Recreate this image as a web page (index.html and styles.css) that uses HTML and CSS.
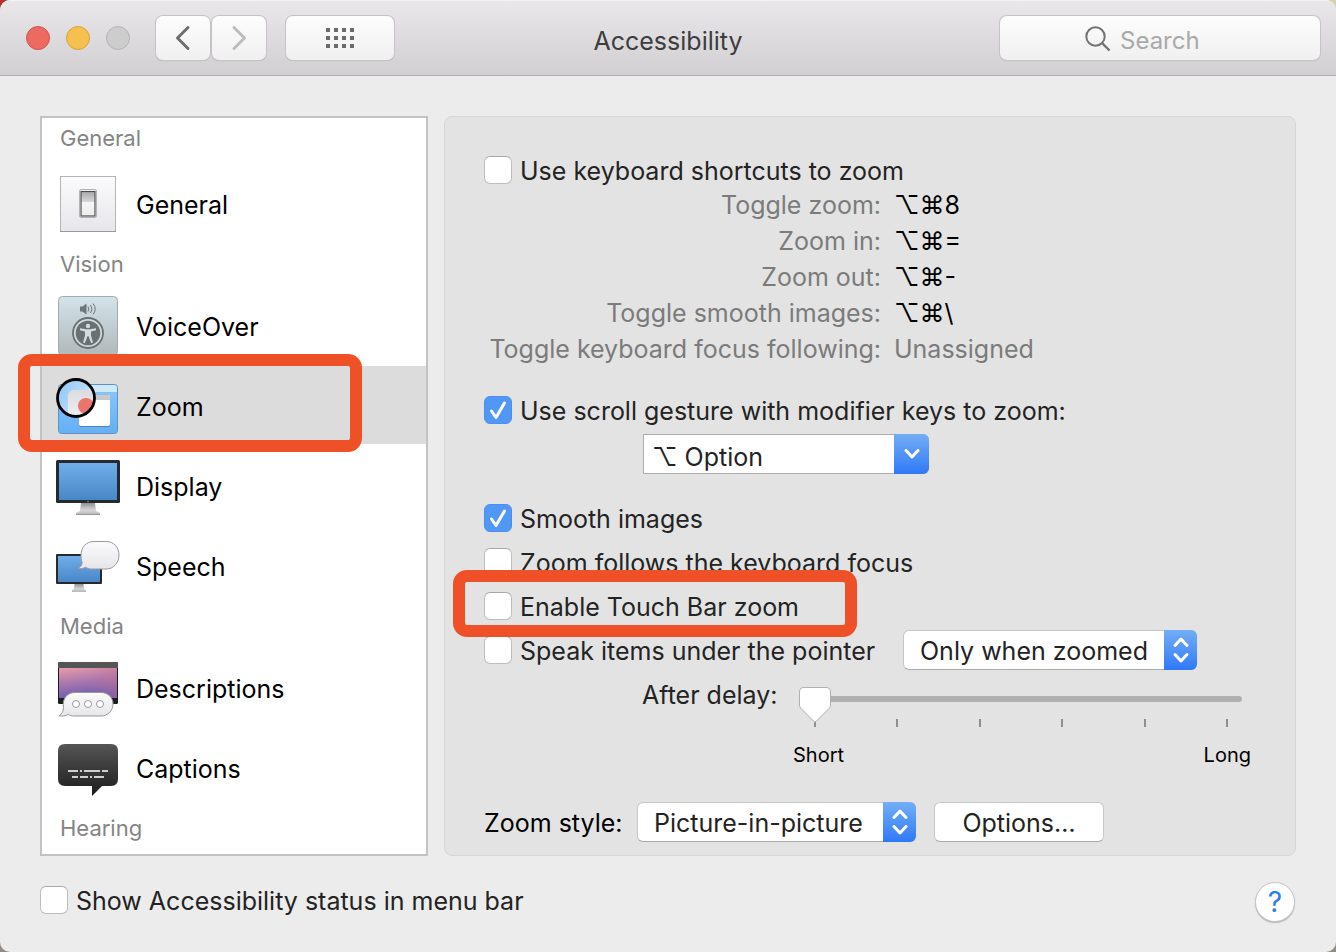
FILE: index.html
```html
<!DOCTYPE html>
<html lang="en">
<head>
<meta charset="utf-8">
<meta name="viewport" content="width=device-width, initial-scale=1">
<title>Accessibility</title>
<link rel="stylesheet" href="styles.css">
</head>
<body>
<div class="window">
  <header class="titlebar">
    <div class="titlebar-left">
      <div class="lights">
        <button class="light light-close" aria-label="Close"></button>
        <button class="light light-minimize" aria-label="Minimize"></button>
        <button class="light light-off" aria-label="Full screen" disabled></button>
      </div>
      <div class="history">
        <button class="tool tool-nav" aria-label="Back">
          <svg width="54" height="44" viewBox="0 0 54 44" fill="none" stroke="#6e6e6e" stroke-width="3" stroke-linecap="round" stroke-linejoin="round"><path d="M32 11.500 21.500 22 32 32.500"/></svg>
        </button>
        <button class="tool tool-nav" aria-label="Forward" disabled>
          <svg width="54" height="44" viewBox="0 0 54 44" fill="none" stroke="#bcbcbc" stroke-width="3" stroke-linecap="round" stroke-linejoin="round"><path d="M22 11.500 32.500 22 22 32.500"/></svg>
        </button>
      </div>
      <button class="tool tool-all" aria-label="Show all">
        <svg width="28" height="20" viewBox="0 0 28 20" fill="#6b6b6b"><path d="M0 0h4v4H0zM8 0h4v4H8zM16 0h4v4h-4zM24 0h4v4h-4zM0 8h4v4H0zM8 8h4v4H8zM16 8h4v4h-4zM24 8h4v4h-4zM0 16h4v4H0zM8 16h4v4H8zM16 16h4v4h-4zM24 16h4v4h-4z"/></svg>
      </button>
    </div>
    <h1 class="title">Accessibility</h1>
    <div class="search">
      <svg class="search-icon" width="26" height="28" viewBox="0 -2 26 28" fill="none" stroke="#727272" stroke-width="2"><circle cx="10.500" cy="10.500" r="9.200"/><path d="M17 17 24.500 24.500" stroke-width="2.400"/></svg>
      <input class="search-input" type="search" placeholder="Search" aria-label="Search">
    </div>
  </header>

  <main class="content">
    <nav class="sidebar" aria-label="Accessibility categories">
      <h2 class="group group-first">General</h2>
      <button class="item">
        <svg class="item-icon" viewBox="0 0 64 64">
          <defs>
            <linearGradient id="plate" x2="0" y2="1"><stop stop-color="#fbfbfc"/><stop offset="1" stop-color="#e6e6ea"/></linearGradient>
            <linearGradient id="switch" x2="0" y2="1"><stop stop-color="#a9a9ab"/><stop offset=".42" stop-color="#d6d6d8"/><stop offset=".45" stop-color="#f6f6f7"/><stop offset="1" stop-color="#ececee"/></linearGradient>
          </defs>
          <rect x="4.500" y="4.500" width="55" height="55" fill="url(#plate)" stroke="#b4b4b7"/>
          <path d="M4 59.500h56" stroke="#98989b"/>
          <rect x="23.500" y="17.500" width="17" height="28" rx="1.500" fill="#fff" stroke="#b4b4b6"/>
          <rect x="25" y="19.500" width="14" height="24.500" fill="url(#switch)" stroke="#4e4e50" stroke-width="1.200"/>
        </svg>
        <span>General</span>
      </button>
      <h2 class="group">Vision</h2>
      <button class="item">
        <svg class="item-icon" viewBox="0 0 64 64">
          <defs><linearGradient id="vo" x2="0" y2="1"><stop stop-color="#d3e3ea"/><stop offset="1" stop-color="#b0b8ba"/></linearGradient></defs>
          <rect x="2.500" y="2.500" width="59" height="59" rx="4" fill="url(#vo)" stroke="#9fabb0"/>
          <path d="M24 12.500h2.500l4-3v11l-4-3H24z" fill="#6c7578"/>
          <path d="M32 12.500q1.500 2.500 0 5M34.500 11q3 4 0 8M37 9.500q4.500 5.500 0 11" fill="none" stroke="#6c7578"/>
          <circle cx="32" cy="39" r="15" fill="#cfd8db" stroke="#687073" stroke-width="1.800"/>
          <circle cx="32" cy="39" r="12.300" fill="#687073"/>
          <g fill="#d2dbdd"><circle cx="32" cy="32" r="2.200"/><path d="M24 34.300l6 1h4l6-1v1.900l-5 1.300v4l2 7-1.900.5-2.700-7h-.8l-2.700 7-1.900-.5 2-7v-4l-5-1.300z"/></g>
        </svg>
        <span>VoiceOver</span>
      </button>
      <button class="item item-selected" aria-current="true">
        <svg class="item-icon" viewBox="0 0 64 64">
          <defs>
            <linearGradient id="desk" x2="0" y2="1"><stop stop-color="#8cc8fb"/><stop offset="1" stop-color="#65aff3"/></linearGradient>
            <linearGradient id="lensfill" x2="1" y2=".6"><stop stop-color="#86c1f7"/><stop offset="1" stop-color="#d6ebfb"/></linearGradient>
            <linearGradient id="lenspage" x2="0" y2="1"><stop stop-color="#dcdce0"/><stop offset="1" stop-color="#f2f2f4"/></linearGradient>
            <clipPath id="lens"><circle cx="20" cy="24" r="18"/></clipPath>
          </defs>
          <rect x="2.500" y="10.500" width="59" height="49" rx="3" fill="url(#desk)" stroke="#5d93c6"/>
          <path d="M3 18v-4q0-3 3-3h52q3 0 3 3v4z" fill="#cfe8fb"/>
          <path d="M3 18.500h58" stroke="#8cbfe8"/>
          <rect x="23" y="22" width="31" height="31" rx="2" fill="#4e86bb"/>
          <rect x="23" y="21" width="31" height="31" rx="2" fill="#fff"/>
          <path d="M23 26v-3q0-2 2-2h27q2 0 2 2v3z" fill="#c9c9cc"/>
          <g clip-path="url(#lens)"><path d="M0 4h42v40H0z" fill="url(#lensfill)"/><path d="M12 46V22q0-6 6-6h26v30z" fill="url(#lenspage)"/><circle cx="30" cy="32" r="8" fill="#e9756d"/></g>
          <circle cx="20" cy="24" r="18.500" fill="none" stroke="#000" stroke-width="2.800"/>
        </svg>
        <span>Zoom</span>
        <i class="marker marker-item"></i>
      </button>
      <button class="item">
        <svg class="item-icon" viewBox="0 0 64 64">
          <defs>
            <linearGradient id="screen" x2="0" y2="1"><stop stop-color="#70aeea"/><stop offset="1" stop-color="#4986c6"/></linearGradient>
            <linearGradient id="stand" x2="0" y2="1"><stop stop-color="#929292"/><stop offset=".6" stop-color="#d6d6d6"/><stop offset="1" stop-color="#b5b5b5"/></linearGradient>
          </defs>
          <path d="M25 49h14l1 8 4 2v2H20v-2l4-2z" fill="url(#stand)"/>
          <path d="M20 60.500h24" stroke="#999"/>
          <rect y="6" width="64" height="43" rx="1.500" fill="#252a2e"/>
          <rect x="3" y="9" width="58" height="37" fill="url(#screen)"/>
          <circle cx="32" cy="47.500" r=".8" fill="#999"/>
        </svg>
        <span>Display</span>
      </button>
      <button class="item">
        <svg class="item-icon" viewBox="0 0 64 64">
          <path d="M18.500 50h9l.5 5 2 1v2H16v-2l2-1z" fill="url(#stand)"/>
          <rect y="20" width="46" height="30" rx="1" fill="#252a2e"/>
          <rect x="2" y="22" width="42" height="26" fill="url(#screen)"/>
          <path d="M38 7.500h12c8 0 13 6 13 13.500s-5 14-13 14H35c-2 0-4-.8-5.500-1.800-2 1.400-5 1.800-7.500 1.300 2.500-1.500 4-3.500 4.200-6C25 26 25 23.500 25 21c0-7.500 5-13.500 13-13.500z" fill="url(#plate)" stroke="#98989c"/>
        </svg>
        <span>Speech</span>
      </button>
      <h2 class="group">Media</h2>
      <button class="item">
        <svg class="item-icon" viewBox="0 0 64 64">
          <defs>
            <linearGradient id="sunset" x1=".1" x2=".35" y2="1"><stop stop-color="#e49ba8"/><stop offset=".5" stop-color="#a876ae"/><stop offset="1" stop-color="#6a5cae"/></linearGradient>
            <linearGradient id="glow" y1="0" x2="1" y2="0"><stop offset=".5" stop-color="#c9708f" stop-opacity="0"/><stop offset="1" stop-color="#c9708f" stop-opacity=".4"/></linearGradient>
          </defs>
          <rect x="2" y="6" width="60" height="42" rx="1.500" fill="#1d1d1f"/>
          <path d="M2 12V7.500Q2 6 3.500 6h57Q62 6 62 7.500V12z" fill="#555"/>
          <path d="M3 12h58v30H3z" fill="url(#sunset)"/><path d="M3 12h58v30H3z" fill="url(#glow)"/>
          <path d="M19 36.500h26c7 0 12 5 12 11.500s-5 12-12 12H18c-2.500 0-4-.8-6-1.500-2.500 1.500-6 2-9 1.300 3-2 4.500-5 4.500-8.300C6 43 11 36.500 19 36.500z" fill="url(#plate)" stroke="#98989c"/>
          <g fill="#fff" stroke="#9b9b9f"><circle cx="20" cy="48" r="3.500"/><circle cx="32" cy="48" r="3.500"/><circle cx="44" cy="48" r="3.500"/></g>
        </svg>
        <span>Descriptions</span>
      </button>
      <button class="item">
        <svg class="item-icon" viewBox="0 0 64 64">
          <defs><linearGradient id="cap" x2="0" y2="1"><stop stop-color="#555"/><stop offset="1" stop-color="#1c1c1c"/></linearGradient></defs>
          <path d="M9 8h46q7 0 7 7v28q0 7-7 7h-9L36 60V50H9q-7 0-7-7V15q0-7 7-7z" fill="url(#cap)"/>
          <path d="M12 35h10m2 0h2m2 0h16m2 0h6M16 41h6m2 0h8m2 0h2m2 0h10" stroke="#cfcfcf" stroke-width="2"/>
        </svg>
        <span>Captions</span>
      </button>
      <h2 class="group">Hearing</h2>
    </nav>

    <section class="panel" aria-label="Zoom">
      <label class="check"><input type="checkbox"><span>Use keyboard shortcuts to zoom</span></label>
      <dl class="shortcuts">
        <dt>Toggle zoom:</dt><dd>⌥⌘8</dd>
        <dt>Zoom in:</dt><dd>⌥⌘=</dd>
        <dt>Zoom out:</dt><dd>⌥⌘-</dd>
        <dt>Toggle smooth images:</dt><dd>⌥⌘\</dd>
        <dt>Toggle keyboard focus following:</dt><dd class="unassigned">Unassigned</dd>
      </dl>
      <label class="check check-gesture"><input type="checkbox" checked><span>Use scroll gesture with modifier keys to zoom:</span></label>
      <div class="picker picker-combo">
        <select aria-label="Modifier key"><option>⌥ Option</option></select>
        <span class="cap"><svg width="16" height="10" viewBox="0 0 16 10"><path d="M2 1.500 8 8l6-6.500"/></svg></span>
      </div>
      <div class="options">
        <label class="check"><input type="checkbox" checked><span>Smooth images</span></label>
        <label class="check"><input type="checkbox"><span>Zoom follows the keyboard focus</span></label>
        <label class="check"><input type="checkbox"><span>Enable Touch Bar zoom</span><i class="marker marker-check"></i></label>
        <div class="speak">
          <label class="check"><input type="checkbox"><span>Speak items under the pointer</span></label>
          <div class="picker picker-when">
            <select aria-label="When to speak items"><option>Only when zoomed</option></select>
            <span class="cap"><svg width="16" height="26" viewBox="0 0 16 26"><path d="M2 8.500 8 2l6 6.500M2 17.500 8 24l6-6.500"/></svg></span>
          </div>
        </div>
      </div>
      <div class="delay">
        <label class="delay-label" for="delay">After delay:</label>
        <div class="slider">
          <input id="delay" type="range" min="0" max="5" value="0">
          <div class="ticks"><i></i><i></i><i></i><i></i><i></i><i></i></div>
          <div class="ends"><span>Short</span><span>Long</span></div>
        </div>
      </div>
      <div class="style-row">
        <label class="style-label" for="zoom-style">Zoom style:</label>
        <div class="picker picker-style">
          <select id="zoom-style"><option>Picture-in-picture</option></select>
          <span class="cap"><svg width="16" height="26" viewBox="0 0 16 26"><path d="M2 8.500 8 2l6 6.500M2 17.500 8 24l6-6.500"/></svg></span>
        </div>
        <button class="push">Options…</button>
      </div>
    </section>
  </main>

  <footer class="footer">
    <label class="check"><input type="checkbox"><span>Show Accessibility status in menu bar</span></label>
    <button class="help" aria-label="Help">?</button>
  </footer>
</div>
</body>
</html>
```
FILE: styles.css
```css
* { box-sizing: border-box; }

body {
  margin: 0;
  background: linear-gradient(90deg, #b3322c 50%, #d8d2a8 50%) top / 100% 50% no-repeat #8f8d84;
  color: #232323;
  font: 25px/32px Inter, "Liberation Sans", "DejaVu Sans", sans-serif;
}

button, input, select { font: inherit; color: inherit; margin: 0; }
button { padding: 0; border: 0; background: none; }
svg { display: block; }

.window {
  min-height: 100vh;
  display: flex;
  flex-direction: column;
  background: #ececec;
  border-radius: 10px;
  overflow: hidden;
}

/* Title bar */
.titlebar {
  display: grid;
  grid-template-columns: 1fr auto 1fr;
  align-items: center;
  height: 76px;
  padding: 0 16px;
  background: linear-gradient(#e9e7ea, #d1cfd2);
  border-top: 1px solid #f4f3f5;
  border-bottom: 1px solid #b0aeb1;
}
.titlebar-left { display: flex; align-items: center; padding-left: 10px; }
.lights { display: flex; gap: 16px; }
.light { width: 24px; height: 24px; border-radius: 50%; border: 1px solid; }
.light-close { background: #ec6a5f; border-color: #d3544a; }
.light-minimize { background: #f5c04f; border-color: #d8a23c; }
.light-off { background: #cecdce; border-color: #b4b3b5; }
.history { display: flex; gap: 2px; margin: 0 20px 0 26px; }
.tool, .search-input {
  height: 44px;
  border-radius: 7px;
  background: linear-gradient(#fdfdfd, #f0f0f0);
  box-shadow: 0 0 0 1px #c5c3c6, 0 1px 1px #a9a8ab;
}
.tool { display: flex; align-items: center; justify-content: center; }
.tool-nav { width: 54px; }
.tool-all { width: 108px; }
.title { margin: 0; padding-top: 6px; font-size: 25px; font-weight: 400; color: #3d3d3d; }
.search { display: grid; align-items: center; justify-self: end; width: 320px; }
.search > * { grid-area: 1 / 1; }
.search-icon { z-index: 1; margin-left: 85px; }
.search-input { width: 100%; padding: 4px 16px 0 120px; border: 0; appearance: none; font-size: 24px; }
.search-input::placeholder { color: #a9a9a9; opacity: 1; }

/* Body */
.content {
  flex: 1;
  display: flex;
  gap: 16px;
  padding: 40px 40px 0;
}
.sidebar {
  flex: none;
  width: 388px;
  background: #fff;
  border: 2px solid #c3c3c3;
}
.group {
  height: 42px;
  margin: 0;
  padding-left: 18px;
  font-size: 22px;
  line-height: 40px;
  font-weight: 400;
  color: #848484;
}
.group-first { height: 46px; }
.item {
  position: relative;
  display: flex;
  gap: 16px;
  width: 100%;
  height: 78px;
  margin-bottom: 2px;
  padding: 8px 14px 4px;
  color: #000;
  line-height: 66px;
  text-align: left;
}
.item-selected { background: #dcdcdc; }
.item-icon { flex: none; width: 64px; height: 64px; }

/* Highlight outlines drawn over the content */
.marker {
  position: absolute;
  z-index: 2;
  border: 12px solid #ee5127;
  border-radius: 14px;
  pointer-events: none;
}
.marker-item { inset: -12px 64px -8px -24px; }
.marker-check { inset: -14px auto -9px -31px; width: 404px; }

/* Settings panel */
.panel {
  flex: 1;
  padding: 37px 39px 12px;
  background: #e3e3e3;
  border: 1px solid #d6d6d6;
  border-radius: 8px;
}
.check {
  position: relative;
  display: flex;
  width: max-content;
  gap: 8px;
  align-items: center;
  height: 32px;
  white-space: nowrap;
}
.check span { padding-top: 2px; }
.check input {
  appearance: none;
  flex: none;
  width: 28px;
  height: 28px;
  border: 1px solid #bdbdbd;
  border-top-color: #a8a8a8;
  border-radius: 6px;
  background: #fff;
}
.check input:checked {
  border-color: #4a8ff0;
  background: url("data:image/svg+xml,%3Csvg xmlns='http://www.w3.org/2000/svg' viewBox='0 0 26 26' fill='none' stroke='white' stroke-width='3' stroke-linecap='round' stroke-linejoin='round'%3E%3Cpath d='M6.500 14 11 20.500 19.500 6'/%3E%3C/svg%3E") #5198f6;
}
.shortcuts {
  display: grid;
  grid-template-columns: 397px auto;
  column-gap: 13px;
  margin: 1px 0 0;
  line-height: 36px;
  color: #7b7b7b;
}
.shortcuts dt { text-align: right; white-space: nowrap; }
.shortcuts dd { margin: 0; color: #000; }
.shortcuts .unassigned { color: #7b7b7b; }
.check-gesture { margin-top: 27px; }

.picker { display: grid; height: 40px; }
.picker > * { grid-area: 1 / 1; }
.picker select {
  appearance: none;
  width: 100%;
  padding: 2px 16px 0;
  border: 1px solid #c6c6c6;
  border-bottom-color: #aaa;
  border-radius: 6px;
  background: #fff;
}
.cap {
  display: flex;
  align-items: center;
  justify-content: center;
  justify-self: end;
  width: 33px;
  border-radius: 0 6px 6px 0;
  background: linear-gradient(#74aef5, #2f79f8);
  pointer-events: none;
}
.cap path { fill: none; stroke: #fff; stroke-width: 3; stroke-linecap: round; stroke-linejoin: round; }
.picker-combo { width: 286px; margin: 8px 0 0 159px; }
.picker-combo select {
  padding: 6px 8px 0;
  border-color: #acacac;
  border-radius: 0 6px 6px 0;
}
.picker-combo .cap { width: 35px; }
.picker-when { width: 294px; }
.picker-style { width: 279px; }

.options { margin-top: 22px; }
.options .check { height: 44px; }
.speak { display: grid; grid-template-columns: 419px auto; align-items: center; justify-content: start; }

.delay { display: flex; gap: 18px; padding-left: 158px; }
.delay-label { flex: none; width: 139px; padding-top: 7px; white-space: nowrap; }
.slider { width: 443px; padding-top: 15px; }
.slider input {
  appearance: none;
  position: relative;
  z-index: 1;
  display: block;
  width: 100%;
  height: 36px;
  background: none;
}
.slider input::-webkit-slider-runnable-track {
  height: 6px;
  margin-bottom: 12px;
  border-radius: 3px;
  background: #b0b0b0;
}
.slider input::-webkit-slider-thumb {
  appearance: none;
  width: 32px;
  height: 36px;
  margin-top: -9px;
  background: url("data:image/svg+xml,%3Csvg xmlns='http://www.w3.org/2000/svg' viewBox='0 0 32 36'%3E%3Cpath d='M5 .500h22q4.500 0 4.500 4.500v13q0 2-1.500 3.500L17 34.500q-1 1-2 0L2 21.500Q.500 20 .500 18V5Q.500.500 5 .500z' fill='white' stroke='%23b0b0b0'/%3E%3C/svg%3E") no-repeat;
}
.ticks { display: flex; justify-content: space-between; margin-top: -4px; padding: 0 14px 0 15px; }
.ticks i { width: 2px; height: 8px; background: #8f8f8f; }
.ends {
  display: flex;
  justify-content: space-between;
  margin: 12px -9px 0 -6px;
  font-size: 20px;
  color: #000;
}
.style-row { display: flex; align-items: center; margin-top: 31px; }
.style-label { width: 153px; padding-top: 2px; color: #000; white-space: nowrap; }
.push {
  width: 170px;
  height: 40px;
  margin-left: 18px;
  padding-top: 2px;
  border: 1px solid #c6c6c6;
  border-bottom-color: #aaa;
  border-radius: 6px;
  background: #fff;
}

/* Footer */
.footer {
  display: flex;
  justify-content: space-between;
  align-items: flex-start;
  padding: 26px 41px 30px 40px;
}
.footer .check { height: 36px; }
.help {
  width: 40px;
  height: 40px;
  border: 1px solid #c6c6c6;
  border-radius: 50%;
  background: #fff;
  box-shadow: 0 1px 1px #b4b4b4;
  color: #2f7cf6;
  font-size: 28px;
}
```
